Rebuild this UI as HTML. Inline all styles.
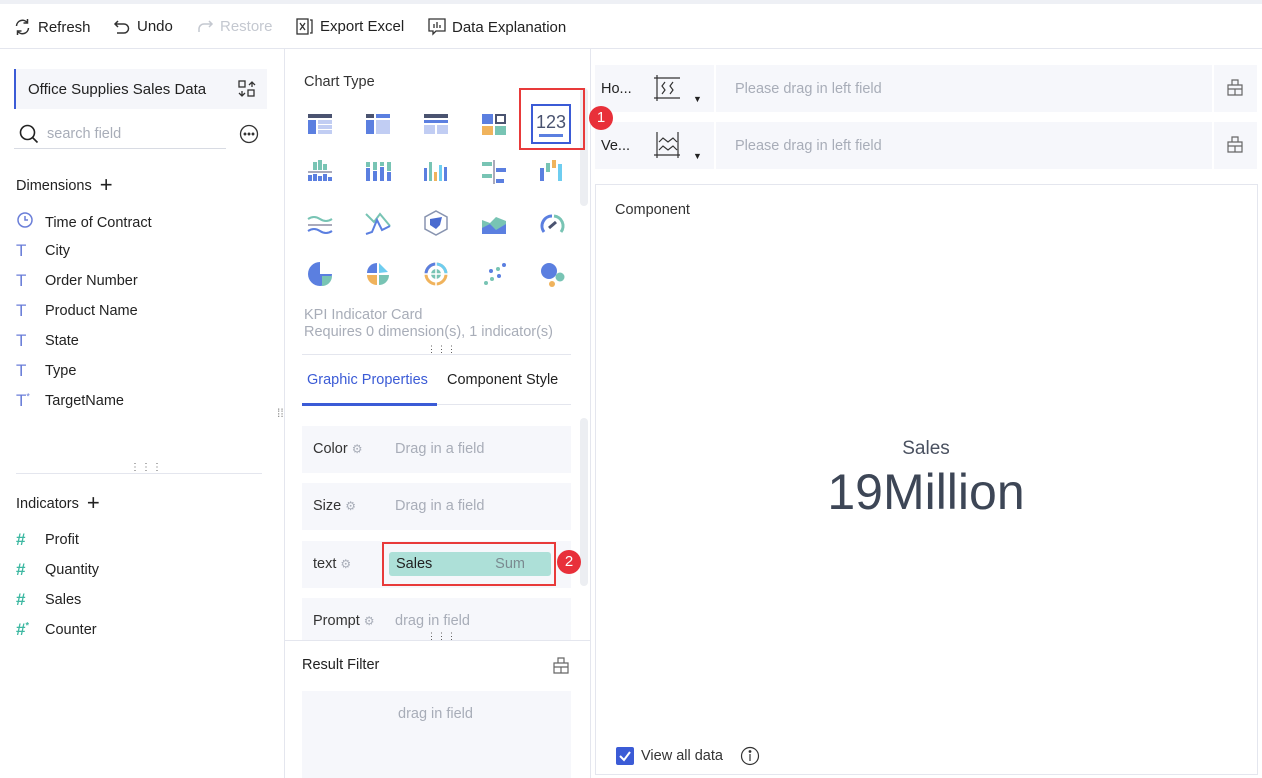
<!DOCTYPE html>
<html><head><meta charset="utf-8"><style>
*{margin:0;padding:0;box-sizing:border-box}
body{width:1262px;height:778px;position:relative;overflow:hidden;background:#fff;font-family:"Liberation Sans",sans-serif;color:#222;font-size:14px}
.a{position:absolute}
.tb{top:18px;font-size:15px;color:#222;display:flex;align-items:center;gap:6px}
.fld{left:16px;display:flex;align-items:center;font-size:14.5px;color:#222}
.fld .ic{width:29px;color:#6a7ed8;font-size:17px;font-weight:300}
.ind .ic{color:#3eb8a2;font-weight:bold}
.g{color:#a8adb8}
.row{left:302px;width:269px;height:47px;background:#f6f7fb}
.row .l{position:absolute;left:11px;top:15px;font-size:14.5px;color:#333}
.row .p{position:absolute;left:93px;top:15px;font-size:14.5px;color:#a8adb8}
.badge{width:24px;height:24px;border-radius:50%;background:#e8303a;color:#fff;font-size:15px;text-align:center;line-height:24px;z-index:5}
</style></head><body>
<div class="a" style="left:0;top:0;width:1262px;height:4px;background:#eef0f5"></div>
<div class="a" style="left:0;top:48px;width:1262px;height:1px;background:#e4e6ee"></div>
<div class="a tb" style="left:13px"><svg width="19" height="18" viewBox="0 0 18 18" fill="none" stroke="#333" stroke-width="1.5"><path d="M3 8a6 6 0 0 1 11-3M15 10a6 6 0 0 1-11 3M14 1v4h-4M4 17v-4h4"/></svg>Refresh</div>
<div class="a tb" style="left:113px"><svg width="18" height="16" viewBox="0 0 18 16" fill="none" stroke="#333" stroke-width="1.5"><path d="M5 2L2 5l3 3M2 5h9a4.5 4.5 0 0 1 0 9H4"/></svg>Undo</div>
<div class="a tb" style="left:196px;color:#c4c8d0"><svg width="18" height="16" viewBox="0 0 18 16" fill="none" stroke="#c4c8d0" stroke-width="1.5"><path d="M13 2l3 3-3 3M16 5H8a5 5 0 0 0-5 5v3"/></svg>Restore</div>
<div class="a tb" style="left:296px"><svg width="18" height="17" viewBox="0 0 18 17" fill="none" stroke="#333" stroke-width="1.3"><rect x="1" y="1" width="11" height="15"/><path d="M4 5l5 7M9 5l-5 7M14 2h2v13h-2"/></svg>Export Excel</div>
<div class="a tb" style="left:428px"><svg width="18" height="18" viewBox="0 0 18 18" fill="none" stroke="#333" stroke-width="1.3"><path d="M1 1h16v12H8l-3 3v-3H1z"/><path d="M6 10V6M9 10V4M12 10V7"/></svg>Data Explanation</div>

<!-- left panel -->
<div class="a" style="left:284px;top:49px;width:1px;height:729px;background:#e4e6ee"></div>
<div class="a" style="left:14px;top:69px;width:253px;height:40px;background:#f5f6fa;border-left:2px solid #3b5bd6"></div>
<div class="a" style="left:28px;top:81px;font-size:15px;color:#222">Office Supplies Sales Data</div>
<svg class="a" style="left:238px;top:80px" width="18" height="18" viewBox="0 0 18 18" fill="none" stroke="#333" stroke-width="1.3"><rect x="1" y="1" width="6" height="6"/><rect x="10" y="10" width="6" height="6"/><path d="M11 5l3-3 3 3M14 2v5M7 13l-3 3-3-3M4 16v-5"/></svg>
<svg class="a" style="left:19px;top:124px" width="20" height="20" viewBox="0 0 20 20" fill="none" stroke="#222" stroke-width="1.6"><circle cx="8.5" cy="8.5" r="7"/><path d="M13.5 13.5l5 5"/></svg>
<div class="a g" style="left:47px;top:126px;font-size:14.5px">search field</div>
<div class="a" style="left:14px;top:148px;width:212px;height:1px;background:#d8dbe3"></div>
<svg class="a" style="left:239px;top:124px" width="20" height="20" viewBox="0 0 20 20" fill="none" stroke="#333" stroke-width="1.3"><circle cx="10" cy="10" r="8.5"/><circle cx="6" cy="10" r=".8" fill="#333"/><circle cx="10" cy="10" r=".8" fill="#333"/><circle cx="14" cy="10" r=".8" fill="#333"/></svg>
<div class="a" style="left:16px;top:172px;font-size:14.5px">Dimensions <span style="font-size:22px;font-weight:300;vertical-align:-2px;margin-left:4px">+</span></div>
<div class="a fld" style="top:211px"><span class="ic"><svg width="18" height="18" viewBox="0 0 18 18" fill="none" stroke="#6a7ed8" stroke-width="1.5"><circle cx="9" cy="9" r="7"/><path d="M9 5v4h3"/></svg></span>Time of Contract</div>
<div class="a fld" style="top:241px"><span class="ic">T</span>City</div>
<div class="a fld" style="top:271px"><span class="ic">T</span>Order Number</div>
<div class="a fld" style="top:301px"><span class="ic">T</span>Product Name</div>
<div class="a fld" style="top:331px"><span class="ic">T</span>State</div>
<div class="a fld" style="top:361px"><span class="ic">T</span>Type</div>
<div class="a fld" style="top:391px"><span class="ic">T<sup style="font-size:9px">*</sup></span>TargetName</div>
<div class="a" style="left:16px;top:473px;width:246px;height:1px;background:#e4e6ee"></div>
<div class="a" style="left:130px;top:462px;font-size:10px;color:#666;letter-spacing:1px">⋮⋮⋮</div>
<div class="a" style="left:277px;top:406px;font-size:12px;color:#888">⁞⁞</div>
<div class="a" style="left:16px;top:490px;font-size:14.5px">Indicators <span style="font-size:22px;font-weight:300;vertical-align:-2px;margin-left:4px">+</span></div>
<div class="a fld ind" style="top:530px"><span class="ic">#</span>Profit</div>
<div class="a fld ind" style="top:560px"><span class="ic">#</span>Quantity</div>
<div class="a fld ind" style="top:590px"><span class="ic">#</span>Sales</div>
<div class="a fld ind" style="top:620px"><span class="ic">#<sup style="font-size:9px">*</sup></span>Counter</div>

<!-- middle -->
<div class="a" style="left:590px;top:49px;width:1px;height:729px;background:#e4e6ee"></div>
<div class="a" style="left:304px;top:74px;font-size:14.5px;color:#333">Chart Type</div>
<div class="a" style="left:580px;top:88px;width:8px;height:118px;border-radius:4px;background:#eceef2"></div>
<svg class="a" style="left:300px;top:100px" width="280" height="200" viewBox="0 0 280 200">
<g transform="translate(8,14)"><rect width="24" height="4" fill="#4a5370"/><rect y="6" width="8" height="14" fill="#5b7fe0"/><rect x="10" y="6" width="14" height="4" fill="#c1cdf3"/><rect x="10" y="11" width="14" height="4" fill="#c1cdf3"/><rect x="10" y="16" width="14" height="4" fill="#c1cdf3"/></g>
<g transform="translate(66,14)"><rect width="8" height="4" fill="#4a5370"/><rect x="10" width="14" height="4" fill="#5b7fe0"/><rect y="6" width="8" height="14" fill="#5b7fe0"/><rect x="10" y="6" width="14" height="14" fill="#c1cdf3"/></g>
<g transform="translate(124,14)"><rect width="24" height="4" fill="#4a5370"/><rect y="6" width="24" height="3" fill="#5b7fe0"/><rect y="11" width="11" height="9" fill="#c1cdf3"/><rect x="13" y="11" width="11" height="9" fill="#c1cdf3"/></g>
<g transform="translate(182,14)"><rect width="11" height="10" fill="#5b7fe0"/><rect x="14" y="1" width="9" height="8" fill="none" stroke="#4a5370" stroke-width="2"/><rect y="12" width="11" height="9" fill="#f0b35c"/><rect x="13" y="12" width="11" height="9" fill="#78c4b4"/></g>
<g transform="translate(8,60)" fill="#5b7fe0"><rect x="5" y="2" width="4" height="8" fill="#78c4b4"/><rect x="10" y="0" width="4" height="10" fill="#78c4b4"/><rect x="15" y="4" width="4" height="6" fill="#78c4b4"/><rect y="11" width="24" height="2" fill="#aab"/><rect x="0" y="15" width="4" height="6"/><rect x="5" y="14" width="4" height="7"/><rect x="10" y="16" width="4" height="5"/><rect x="15" y="14" width="4" height="7"/><rect x="20" y="17" width="4" height="4"/></g>
<g transform="translate(66,60)"><rect x="0" y="2" width="4" height="5" fill="#78c4b4"/><rect x="0" y="8" width="4" height="13" fill="#5b7fe0"/><rect x="7" y="2" width="4" height="8" fill="#78c4b4"/><rect x="7" y="11" width="4" height="10" fill="#5b7fe0"/><rect x="14" y="2" width="4" height="4" fill="#78c4b4"/><rect x="14" y="7" width="4" height="14" fill="#5b7fe0"/><rect x="21" y="2" width="4" height="9" fill="#78c4b4"/><rect x="21" y="12" width="4" height="9" fill="#5b7fe0"/></g>
<g transform="translate(124,60)"><rect x="0" y="8" width="3" height="13" fill="#5b7fe0"/><rect x="5" y="2" width="3" height="19" fill="#78c4b4"/><rect x="10" y="12" width="3" height="9" fill="#f0b35c"/><rect x="15" y="5" width="3" height="16" fill="#6ecdf0"/><rect x="20" y="7" width="3" height="14" fill="#5b7fe0"/></g>
<g transform="translate(182,60)"><rect x="11" y="0" width="2" height="24" fill="#aab"/><rect x="0" y="2" width="10" height="4" fill="#78c4b4"/><rect x="14" y="8" width="10" height="4" fill="#5b7fe0"/><rect x="0" y="14" width="10" height="4" fill="#78c4b4"/><rect x="14" y="19" width="8" height="4" fill="#5b7fe0"/></g>
<g transform="translate(240,60)"><rect x="0" y="8" width="4" height="13" fill="#5b7fe0"/><rect x="6" y="3" width="4" height="9" fill="#78c4b4"/><rect x="12" y="0" width="4" height="8" fill="#f0b35c"/><rect x="18" y="4" width="4" height="17" fill="#6ecdf0"/></g>
<g transform="translate(8,114)" fill="none" stroke-width="2"><path d="M0 5q6-4 12 0t12 0" stroke="#78c4b4"/><path d="M0 11h24" stroke="#aab"/><path d="M0 17q6-4 12 0t12 0" stroke="#5b7fe0"/></g>
<g transform="translate(66,112)" fill="none" stroke-width="2"><path d="M0 2l8 8 6-8 10 12" stroke="#78c4b4"/><path d="M0 22l6-2 5-12 5 10 8-4" stroke="#5b7fe0"/></g>
<g transform="translate(124,110)"><path d="M12 1l11 6v12l-11 6-11-6V7z" fill="none" stroke="#8894b0" stroke-width="1.5"/><path d="M6 9l12-2-2 8-4 4-6-4z" fill="#4a6bd0"/></g>
<g transform="translate(182,112)"><path d="M0 8l8 3 6-6 10 4v12H0z" fill="#78c4b4"/><path d="M0 16l8-4 6 6 10-6v10H0z" fill="#5b7fe0"/></g>
<g transform="translate(240,112)" fill="none" stroke-width="3"><path d="M4 20A10 10 0 0 1 12 4" stroke="#5b7fe0"/><path d="M14 4a10 10 0 0 1 7 16" stroke="#78c4b4"/><path d="M9 16l7-6" stroke="#4a5370" stroke-width="3"/></g>
<g transform="translate(8,162)"><path d="M12 12V0a12 12 0 1 0 12 12z" fill="#5b7fe0"/><path d="M14 14h10a10 10 0 0 1-10 10z" fill="#78c4b4"/></g>
<g transform="translate(66,162)"><path d="M11 11V1a10 10 0 0 0-10 10z" fill="#5b7fe0"/><path d="M13 11V1l9 9z" fill="#6ecdf0"/><path d="M11 13H1a10 10 0 0 0 10 10z" fill="#f0b35c"/><path d="M13 13h10a10 10 0 0 1-10 10z" fill="#78c4b4"/></g>
<g transform="translate(124,162)"><circle cx="12" cy="12" r="10" fill="none" stroke="#f0b35c" stroke-width="3"/><path d="M2 12A10 10 0 0 1 12 2" fill="none" stroke="#5b7fe0" stroke-width="3"/><path d="M12 2a10 10 0 0 1 10 10" fill="none" stroke="#6ecdf0" stroke-width="3"/><circle cx="12" cy="12" r="5" fill="#78c4b4"/><path d="M12 0v24M0 12h24" stroke="#fff" stroke-width="1.5"/></g>
<g transform="translate(182,162)"><circle cx="22" cy="3" r="2" fill="#5b7fe0"/><circle cx="16" cy="7" r="2" fill="#78c4b4"/><circle cx="9" cy="9" r="2" fill="#5b7fe0"/><circle cx="17" cy="14" r="2" fill="#5b7fe0"/><circle cx="10" cy="17" r="2" fill="#78c4b4"/><circle cx="4" cy="21" r="2" fill="#78c4b4"/></g>
<g transform="translate(240,162)"><circle cx="9" cy="9" r="8" fill="#5b7fe0"/><circle cx="20" cy="15" r="4.5" fill="#78c4b4"/><circle cx="12" cy="22" r="3" fill="#f0b35c"/></g>
</svg>
<div class="a" style="left:519px;top:88px;width:66px;height:62px;border:2px solid #e83a3a"></div>
<div class="a" style="left:531px;top:104px;width:40px;height:40px;border:2px solid #3b5bd6;text-align:center;font-size:18px;color:#4a5370;line-height:32px">123<div style="position:absolute;left:6px;right:6px;top:28px;height:3px;background:#5b7fe0"></div></div>

<div class="a g" style="left:304px;top:307px;font-size:14.5px;line-height:17px">KPI Indicator Card<br>Requires 0 dimension(s), 1 indicator(s)</div>
<div class="a" style="left:302px;top:354px;width:269px;height:1px;background:#e4e6ee"></div>
<div class="a" style="left:427px;top:344px;font-size:9px;color:#555;letter-spacing:1px">⋮⋮⋮</div>
<div class="a" style="left:307px;top:372px;font-size:14.5px;color:#3b5bd6">Graphic Properties</div>
<div class="a" style="left:447px;top:372px;font-size:14.5px;color:#222">Component Style</div>
<div class="a" style="left:302px;top:404px;width:269px;height:1px;background:#e4e6ee"></div>
<div class="a" style="left:302px;top:403px;width:135px;height:3px;background:#3b5bd6"></div>
<div class="a" style="left:580px;top:418px;width:8px;height:168px;border-radius:4px;background:#eceef2"></div>
<div class="a row" style="top:426px"><span class="l">Color <span class="g" style="font-size:12px">⚙</span></span><span class="p">Drag in a field</span></div>
<div class="a row" style="top:483px"><span class="l">Size <span class="g" style="font-size:12px">⚙</span></span><span class="p">Drag in a field</span></div>
<div class="a row" style="top:541px"><span class="l">text <span class="g" style="font-size:12px">⚙</span></span></div>
<div class="a" style="left:382px;top:542px;width:174px;height:44px;border:2px solid #e83a3a"></div>
<div class="a" style="left:389px;top:552px;width:162px;height:24px;background:#ade0d8;border-radius:3px;font-size:14.5px;line-height:24px"><span style="margin-left:7px">Sales</span><span style="position:absolute;right:26px;color:#7a8a90">Sum</span></div>
<div class="a badge" style="left:557px;top:550px">2</div>
<div class="a row" style="top:598px;height:42px"><span class="l">Prompt <span class="g" style="font-size:12px">⚙</span></span><span class="p">drag in field</span></div>
<div class="a" style="left:284px;top:640px;width:306px;height:1px;background:#e4e6ee"></div>
<div class="a" style="left:427px;top:631px;font-size:9px;color:#555;letter-spacing:1px">⋮⋮⋮</div>
<div class="a" style="left:302px;top:657px;font-size:14.5px;color:#222">Result Filter</div>
<svg class="a" style="left:553px;top:657px" width="16" height="17" viewBox="0 0 16 17" fill="none" stroke="#666" stroke-width="1.2"><path d="M1 6h14v10H1zM5 6V1h6v5M1 10h14M8 10v6"/></svg>
<div class="a" style="left:302px;top:691px;width:269px;height:87px;background:#f6f7fb"></div>
<div class="a g" style="left:398px;top:706px;font-size:14.5px">drag in field</div>

<!-- right -->
<div class="a" style="left:595px;top:65px;width:662px;height:47px;background:#f6f7fb"></div>
<div class="a" style="left:595px;top:122px;width:662px;height:47px;background:#f6f7fb"></div>
<div class="a" style="left:714px;top:65px;width:2px;height:104px;background:#fff"></div>
<div class="a" style="left:1212px;top:65px;width:2px;height:104px;background:#fff"></div>
<div class="a badge" style="left:589px;top:106px">1</div>
<div class="a" style="left:601px;top:81px;font-size:14.5px">Ho...</div>
<div class="a" style="left:601px;top:138px;font-size:14.5px">Ve...</div>
<svg class="a" style="left:653px;top:74px" width="30" height="28" viewBox="0 0 30 28" fill="none" stroke="#333" stroke-width="1.2"><path d="M4 1v26M1 4h26M1 24h26M12 8l-3 4 3 4-3 4M20 8l-3 4 3 4-3 4"/></svg>
<svg class="a" style="left:653px;top:131px" width="30" height="28" viewBox="0 0 30 28" fill="none" stroke="#333" stroke-width="1.2"><path d="M4 1v26M1 24h26M25 1v26M6 11l4-4 5 4 5-4 4 4M6 19l4-4 5 4 5-4 4 4"/></svg>
<div class="a" style="left:693px;top:94px;font-size:9px">▼</div>
<div class="a" style="left:693px;top:151px;font-size:9px">▼</div>
<div class="a g" style="left:735px;top:81px;font-size:14.5px">Please drag in left field</div>
<div class="a g" style="left:735px;top:138px;font-size:14.5px">Please drag in left field</div>
<svg class="a" style="left:1227px;top:79px" width="16" height="17" viewBox="0 0 16 17" fill="none" stroke="#666" stroke-width="1.2"><path d="M1 6h14v10H1zM5 6V1h6v5M1 10h14M8 10v6"/></svg>
<svg class="a" style="left:1227px;top:136px" width="16" height="17" viewBox="0 0 16 17" fill="none" stroke="#666" stroke-width="1.2"><path d="M1 6h14v10H1zM5 6V1h6v5M1 10h14M8 10v6"/></svg>
<div class="a" style="left:595px;top:184px;width:663px;height:591px;border:1px solid #e4e6ee"></div>
<div class="a" style="left:615px;top:202px;font-size:14.5px;color:#333">Component</div>
<div class="a" style="left:800px;top:438px;width:252px;text-align:center;font-size:19px;color:#4a5160">Sales</div>
<div class="a" style="left:780px;top:463px;width:292px;text-align:center;font-size:50px;color:#3d4656">19Million</div>
<div class="a" style="left:616px;top:747px;width:18px;height:18px;background:#3b5bd6;border-radius:2px"><svg width="18" height="18" viewBox="0 0 18 18"><path d="M4 9l4 4 6-8" fill="none" stroke="#fff" stroke-width="2"/></svg></div>
<div class="a" style="left:641px;top:748px;font-size:14.5px;color:#333">View all data</div>
<svg class="a" style="left:740px;top:746px" width="20" height="20" viewBox="0 0 20 20" fill="none" stroke="#333" stroke-width="1.2"><circle cx="10" cy="10" r="8.5"/><path d="M10 8v7"/><circle cx="10" cy="5.5" r=".8" fill="#333"/></svg>
</body></html>
